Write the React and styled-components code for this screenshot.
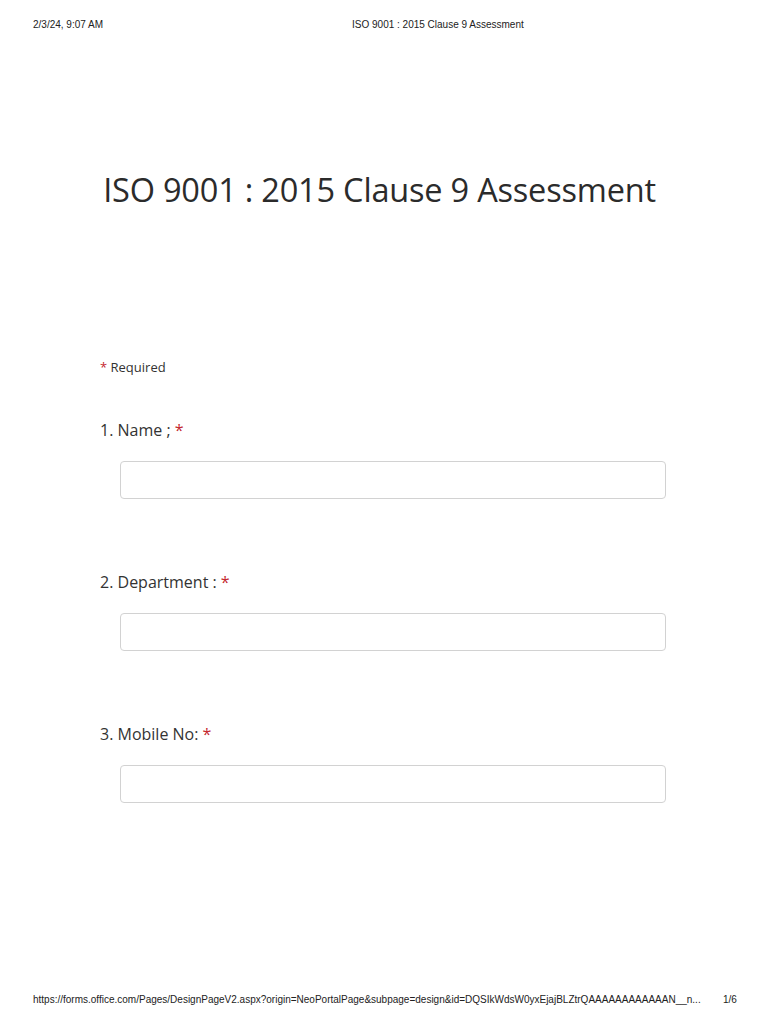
import React from 'react'
import styled, { createGlobalStyle } from 'styled-components'

const GlobalStyle = createGlobalStyle`
  html, body {
    margin: 0;
    padding: 0;
    background: #ffffff;
  }
`

const questions = [
  { num: 1, label: 'Name ;' },
  { num: 2, label: 'Department :' },
  { num: 3, label: 'Mobile No:' },
]

const App = () => {
  return (
    <>
      <GlobalStyle />
      <Page>
        <PrintHeader>
          <HeaderDate>2/3/24, 9:07 AM</HeaderDate>
          <HeaderTitle>ISO 9001 : 2015 Clause 9 Assessment</HeaderTitle>
        </PrintHeader>

        <Main>
          <FormTitle>ISO 9001 : 2015 Clause 9 Assessment</FormTitle>

          <Required><Star>*</Star> Required</Required>

          {questions.map((q) => (
            <Question key={q.num}>
              <QuestionLabel>
                {q.num}. {q.label} <Star>*</Star>
              </QuestionLabel>
              <TextBox />
            </Question>
          ))}
        </Main>

        <PrintFooter>
          <FooterUrl>https://forms.office.com/Pages/DesignPageV2.aspx?origin=NeoPortalPage&amp;subpage=design&amp;id=DQSIkWdsW0yxEjajBLZtrQAAAAAAAAAAAAN__n...</FooterUrl>
          <PageNum>1/6</PageNum>
        </PrintFooter>
      </Page>
    </>
  )
}

const Page = styled.div`
width: 768px;
height: 1024px;
display: flex;
flex-direction: column;
background: #ffffff;
`

const PrintHeader = styled.div`
display: flex;
align-items: center;
padding: 18px 0 0 33px;
height: 12px;
font-family: "Liberation Sans", Arial, sans-serif;
font-size: 10px;
color: #222;
`

const HeaderDate = styled.div`
width: 319px;
`

const HeaderTitle = styled.div``

const Main = styled.div`
flex: 1;
display: flex;
flex-direction: column;
padding: 0 109px 0 100px;
font-family: "Open Sans", "Noto Sans", sans-serif;
color: #333;
`

const FormTitle = styled.h1`
margin: 138px 0 0 0;
text-align: center;
font-size: 32.5px;
font-weight: 400;
line-height: 44px;
color: #2b2b2b;
letter-spacing: -0.2px;
`

const Required = styled.div`
margin-top: 146px;
font-size: 13px;
line-height: 18px;
color: #333;
`

const Star = styled.span`
color: #c4262e;
`

const Question = styled.div`
display: flex;
flex-direction: column;
margin-top: 43px;
& + & {
  margin-top: 72px;
}
`

const QuestionLabel = styled.div`
font-size: 16px;
line-height: 22px;
color: #333;
`

const TextBox = styled.div`
margin: 20px 0 0 20px;
width: 544px;
height: 36px;
border: 1px solid #d2d2d2;
border-radius: 4px;
background: #fff;
`

const PrintFooter = styled.div`
display: flex;
align-items: center;
padding: 0 0 19px 33px;
height: 12px;
font-family: "Liberation Sans", Arial, sans-serif;
font-size: 10px;
color: #222;
`

const FooterUrl = styled.div`
width: 690px;
white-space: nowrap;
`

const PageNum = styled.div``

export default App
